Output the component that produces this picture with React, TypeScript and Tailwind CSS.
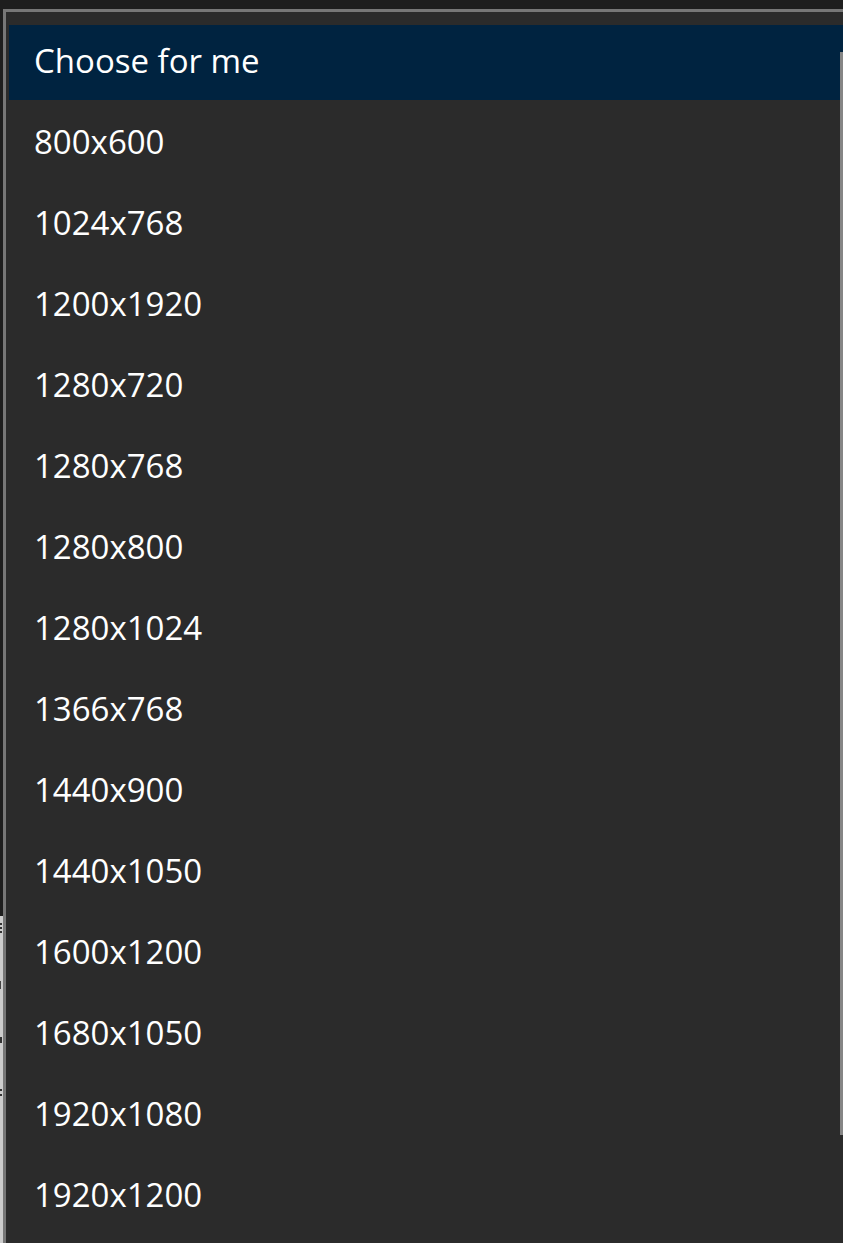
import React from "react";

const items = [
  "Choose for me",
  "800x600",
  "1024x768",
  "1200x1920",
  "1280x720",
  "1280x768",
  "1280x800",
  "1280x1024",
  "1366x768",
  "1440x900",
  "1440x1050",
  "1600x1200",
  "1680x1050",
  "1920x1080",
  "1920x1200",
];

export default function App() {
  return (
    <div
      className="w-[843px] h-[1243px] bg-[#1e1e1e] flex overflow-hidden"
      style={{ fontFamily: '"Open Sans", "Noto Sans", sans-serif' }}
    >
      <div className="w-[3px] flex flex-col shrink-0">
        <div className="h-[916px] bg-[#1e1e1e]" />
        <div className="flex-1 bg-[#cdcdcd] flex flex-col">
          <div className="mt-[7px] h-[2px] w-[2px] bg-[#333]" />
          <div className="mt-[2px] h-[2px] w-[2px] bg-[#333]" />
          <div className="mt-[2px] h-[2px] w-[2px] bg-[#333]" />
          <div className="mt-[48px] h-[8px] w-[1px] bg-[#444]" />
          <div className="mt-[48px] h-[6px] w-[2px] bg-[#333]" />
          <div className="mt-[46px] h-[2px] w-[2px] bg-[#333]" />
          <div className="mt-[3px] h-[2px] w-[2px] bg-[#333]" />
        </div>
      </div>
      <div className="flex-1 flex flex-col">
        <div className="h-[9px] shrink-0 bg-[#1e1e1e]" />
        <div className="relative flex-1 bg-[#2b2b2b] border-t-[3px] border-l-[3px] border-[#777777] pt-[10px] pl-[3px] flex flex-col">
          {items.map((t, i) => (
            <div
              key={t}
              className={`h-[75px] my-[3px] flex items-center pl-[25px] pb-[4px] text-[33px] text-white shrink-0 ${
                i === 0 ? "bg-[#002340]" : ""
              }`}
            >
              {t}
            </div>
          ))}
          <div className="absolute right-0 top-[40px] w-[3px] h-[1083px] bg-[#858585]" />
        </div>
      </div>
    </div>
  );
}
